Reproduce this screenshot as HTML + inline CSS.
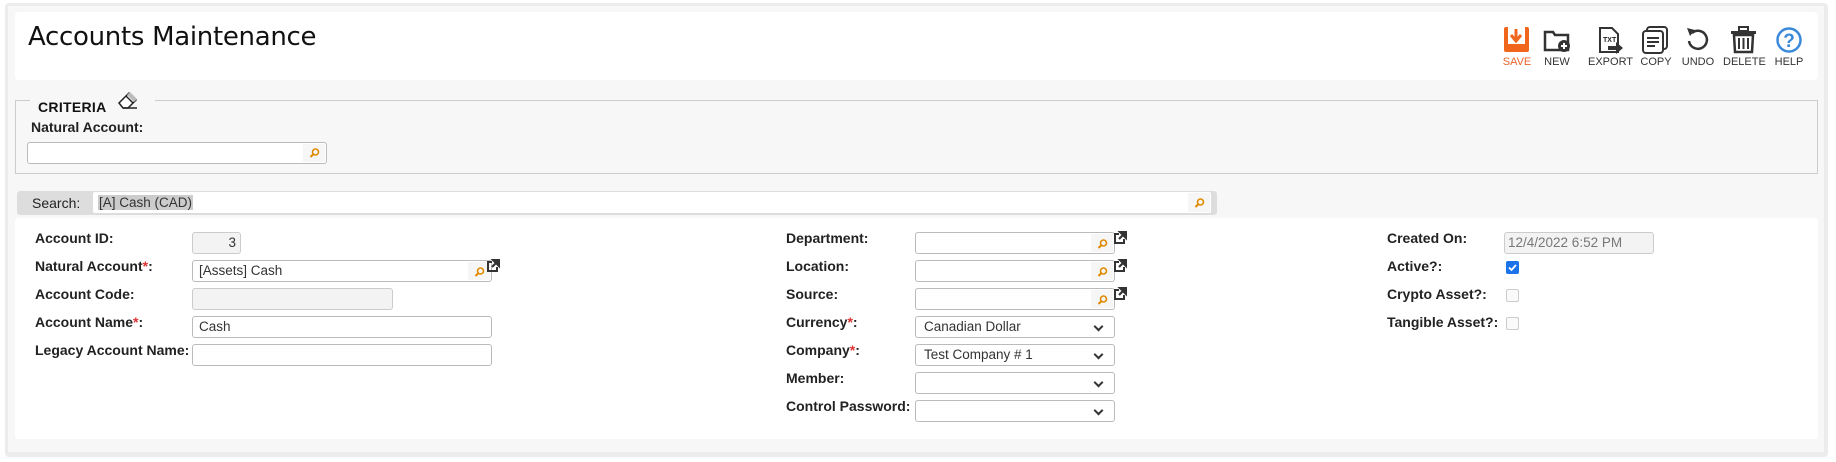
<!DOCTYPE html>
<html><head><meta charset="utf-8"><style>
*{box-sizing:border-box;margin:0;padding:0}
body{width:1836px;height:462px;background:#fff;font-family:"Liberation Sans",Arial,sans-serif;position:relative;overflow:hidden}
.a{position:absolute}
.lbl{position:absolute;font-weight:bold;font-size:14px;color:#222;line-height:16px;margin-top:-3px}
.lbl i{color:#d33;font-style:normal}
.inp{position:absolute;height:22px;border:1px solid #bbb;border-radius:3px;background:#fff;font-size:13.5px;color:#333;line-height:20px;padding-left:6px}
.dis{background:#f3f3f3;border-color:#ccc}
.mg{position:absolute;right:1px;top:1px;width:22px;height:18px;background:#f6f6f6}
.sel::after{content:"";position:absolute;right:12px;top:6px;width:5px;height:5px;border-right:2px solid #333;border-bottom:2px solid #333;transform:rotate(45deg)}
.tb{position:absolute;top:56px;font-size:11px;color:#333;text-align:center}
.cb{position:absolute;width:13px;height:13px;border:1px solid #ccc;border-radius:2px;background:#fafafa}
</style></head><body>
<div class="a" style="left:0;top:0;width:1836px;height:462px;background:#fff"></div>
<div class="a" style="left:5px;top:3px;width:1823px;height:454px;background:#ececec;border-radius:4px"></div>
<div class="a" style="left:8px;top:6px;width:1816px;height:446px;background:#f7f7f7"></div>
<div class="a" style="left:15px;top:12px;width:1803px;height:68px;background:#fff;border-radius:4px"></div>
<div class="a" style="left:28px;top:22px;font-size:26px;color:#111;font-family:'DejaVu Sans','Liberation Sans',sans-serif;letter-spacing:-0.3px">Accounts Maintenance</div>

<!-- toolbar -->
<svg class="a" style="left:1500px;top:24px" width="320" height="32" viewBox="1500 24 320 32">
<rect x="1504" y="27" width="25" height="25" rx="2" fill="#f0661c"/>
<rect x="1508" y="27" width="17" height="17" fill="#fff"/>
<path d="M1516 29v11M1511 35l5 6 5-6" stroke="#f0661c" stroke-width="3" fill="none"/>
<path d="M1545 32h8l2 3h13v15h-23z" fill="none" stroke="#333" stroke-width="2.5"/>
<circle cx="1564" cy="46" r="6" fill="#333"/><path d="M1564 43v6M1561 46h6" stroke="#fff" stroke-width="2"/>
<path d="M1600 28h12l6 6v18h-18z" fill="none" stroke="#333" stroke-width="2"/>
<text x="1603" y="42" font-size="7" font-weight="bold" font-family="Liberation Sans" fill="#222">TXT</text>
<path d="M1608 46h8v-4l7 6-7 6v-4h-8z" fill="#333"/>
<rect x="1647" y="27" width="20" height="22" rx="3" fill="none" stroke="#333" stroke-width="2"/>
<rect x="1643" y="31" width="20" height="22" rx="3" fill="#fff" stroke="#333" stroke-width="2"/>
<path d="M1647 38h12M1647 42h12M1647 46h8" stroke="#333" stroke-width="2"/>
<path d="M1692 33a9 9 0 1 1 -3 8" fill="none" stroke="#333" stroke-width="2.5"/>
<path d="M1687 28l8 2-5 6z" fill="#333"/>
<rect x="1731" y="31" width="25" height="3" fill="#333"/><rect x="1739" y="27" width="9" height="4" fill="none" stroke="#333" stroke-width="2"/>
<path d="M1734 35h19l-1 17h-17z" fill="none" stroke="#333" stroke-width="2.5"/>
<path d="M1739 38v11M1743.5 38v11M1748 38v11" stroke="#333" stroke-width="2"/>
<circle cx="1789" cy="40" r="11.5" fill="#fff" stroke="#3b8ad9" stroke-width="2.5"/>
<text x="1789" y="47" font-size="19" font-weight="bold" text-anchor="middle" font-family="Liberation Sans" fill="#3b8ad9">?</text>
</svg>
<div class="tb" style="left:1500px;width:34px;color:#e8652a">SAVE</div>
<div class="tb" style="left:1542px;width:30px">NEW</div>
<div class="tb" style="left:1588px;width:44px">EXPORT</div>
<div class="tb" style="left:1639px;width:34px">COPY</div>
<div class="tb" style="left:1681px;width:34px">UNDO</div>
<div class="tb" style="left:1723px;width:42px">DELETE</div>
<div class="tb" style="left:1772px;width:34px">HELP</div>

<!-- criteria -->
<div class="a" style="left:15px;top:100px;width:1803px;height:74px;border:1px solid #ccc"></div>
<div class="a" style="left:30px;top:92px;width:125px;height:16px;background:#f7f7f7"></div>
<div class="a" style="left:38px;top:99px;font-weight:bold;font-size:14px;color:#111;letter-spacing:0.3px">CRITERIA</div>
<svg class="a" style="left:115px;top:87px" width="26" height="26" viewBox="0 0 26 26"><path d="M4 16l10-10 7 7-8 8H8z" fill="#fff" stroke="#222" stroke-width="1.5"/><path d="M11 9l7 7" stroke="#222" stroke-width="1.5"/><path d="M12 8l3-3 7 7-3 3z" fill="#bbb"/><path d="M8 21h14" stroke="#222" stroke-width="1.5"/></svg>
<div class="lbl" style="left:31px;top:122px">Natural Account:</div>
<div class="inp" style="left:27px;top:142px;width:300px"><span class="mg"><svg width="22" height="18"><circle cx="12.5" cy="8" r="3" fill="none" stroke="#e08a00" stroke-width="1.6"/><path d="M10.5 10l-3 3" stroke="#e08a00" stroke-width="2"/></svg></span></div>

<!-- search -->
<div class="a" style="left:17px;top:191px;width:1200px;height:24px;background:#ddd;border-radius:3px"></div>
<div class="a" style="left:32px;top:195px;font-size:14px;color:#222">Search:</div>
<div class="a" style="left:93px;top:192px;width:1118px;height:21px;background:#fff;border-radius:2px"></div>
<div class="a" style="left:98px;top:195px;font-size:13.5px;color:#333;background:#ccc;line-height:15px;padding:0 1px">[A] Cash (CAD)</div>
<div class="a" style="left:1188px;top:193px;width:22px;height:19px;background:#f6f6f6"><svg width="22" height="18"><circle cx="12.5" cy="9" r="3" fill="none" stroke="#e08a00" stroke-width="1.6"/><path d="M10.5 11l-3 3" stroke="#e08a00" stroke-width="2"/></svg></div>

<!-- form -->
<div class="a" style="left:15px;top:218px;width:1803px;height:221px;background:#fff;border-radius:3px"></div>

<div class="lbl" style="left:35px;top:233px">Account ID:</div>
<div class="inp dis" style="left:192px;top:232px;width:49px;text-align:right;padding-right:4px">3</div>
<div class="lbl" style="left:35px;top:261px">Natural Account<i>*</i>:</div>
<div class="inp" style="left:192px;top:260px;width:300px">[Assets] Cash<span class="mg"><svg width="22" height="18"><circle cx="12.5" cy="9" r="3" fill="none" stroke="#e08a00" stroke-width="1.6"/><path d="M10.5 11l-3 3" stroke="#e08a00" stroke-width="2"/></svg></span></div>
<div class="lbl" style="left:35px;top:289px">Account Code:</div>
<div class="inp dis" style="left:192px;top:288px;width:201px"></div>
<div class="lbl" style="left:35px;top:317px">Account Name<i>*</i>:</div>
<div class="inp" style="left:192px;top:316px;width:300px">Cash</div>
<div class="lbl" style="left:35px;top:345px">Legacy Account Name:</div>
<div class="inp" style="left:192px;top:344px;width:300px"></div>

<div class="lbl" style="left:786px;top:233px">Department:</div>
<div class="lbl" style="left:786px;top:261px">Location:</div>
<div class="lbl" style="left:786px;top:289px">Source:</div>
<div class="lbl" style="left:786px;top:317px">Currency<i>*</i>:</div>
<div class="lbl" style="left:786px;top:345px">Company<i>*</i>:</div>
<div class="lbl" style="left:786px;top:373px">Member:</div>
<div class="lbl" style="left:786px;top:401px">Control Password:</div>

<div class="inp" style="left:915px;top:232px;width:200px"><span class="mg"><svg width="22" height="18"><circle cx="12.5" cy="9" r="3" fill="none" stroke="#e08a00" stroke-width="1.6"/><path d="M10.5 11l-3 3" stroke="#e08a00" stroke-width="2"/></svg></span></div>
<div class="inp" style="left:915px;top:260px;width:200px"><span class="mg"><svg width="22" height="18"><circle cx="12.5" cy="9" r="3" fill="none" stroke="#e08a00" stroke-width="1.6"/><path d="M10.5 11l-3 3" stroke="#e08a00" stroke-width="2"/></svg></span></div>
<div class="inp" style="left:915px;top:288px;width:200px"><span class="mg"><svg width="22" height="18"><circle cx="12.5" cy="9" r="3" fill="none" stroke="#e08a00" stroke-width="1.6"/><path d="M10.5 11l-3 3" stroke="#e08a00" stroke-width="2"/></svg></span></div>
<div class="inp sel" style="left:915px;top:316px;width:200px;padding-left:8px">Canadian Dollar</div>
<div class="inp sel" style="left:915px;top:344px;width:200px;padding-left:8px">Test Company # 1</div>
<div class="inp sel" style="left:915px;top:372px;width:200px"></div>
<div class="inp sel" style="left:915px;top:400px;width:200px"></div>

<svg class="a" style="left:486px;top:259px" width="14" height="14" viewBox="0 0 14 14"><path d="M6 3H2v9h9V8" fill="none" stroke="#333" stroke-width="2"/><path d="M7 1h6v6z M12 2L6 8" fill="#333" stroke="#333" stroke-width="2.2"/></svg>
<svg class="a" style="left:1113px;top:231px" width="14" height="14" viewBox="0 0 14 14"><path d="M6 3H2v9h9V8" fill="none" stroke="#333" stroke-width="2"/><path d="M7 1h6v6z M12 2L6 8" fill="#333" stroke="#333" stroke-width="2.2"/></svg>
<svg class="a" style="left:1113px;top:259px" width="14" height="14" viewBox="0 0 14 14"><path d="M6 3H2v9h9V8" fill="none" stroke="#333" stroke-width="2"/><path d="M7 1h6v6z M12 2L6 8" fill="#333" stroke="#333" stroke-width="2.2"/></svg>
<svg class="a" style="left:1113px;top:287px" width="14" height="14" viewBox="0 0 14 14"><path d="M6 3H2v9h9V8" fill="none" stroke="#333" stroke-width="2"/><path d="M7 1h6v6z M12 2L6 8" fill="#333" stroke="#333" stroke-width="2.2"/></svg>

<div class="lbl" style="left:1387px;top:233px">Created On:</div>
<div class="inp dis" style="left:1504px;top:232px;width:150px;color:#777;padding-left:3px">12/4/2022 6:52 PM</div>
<div class="lbl" style="left:1387px;top:261px">Active?:</div>
<div class="a" style="left:1506px;top:261px;width:13px;height:13px;background:#1a73e8;border-radius:2px"><svg width="13" height="13"><path d="M3 6.5l2.5 2.5 4.5-5" stroke="#fff" stroke-width="1.8" fill="none"/></svg></div>
<div class="lbl" style="left:1387px;top:289px">Crypto Asset?:</div>
<div class="cb" style="left:1506px;top:289px"></div>
<div class="lbl" style="left:1387px;top:317px">Tangible Asset?:</div>
<div class="cb" style="left:1506px;top:317px"></div>
</body></html>
